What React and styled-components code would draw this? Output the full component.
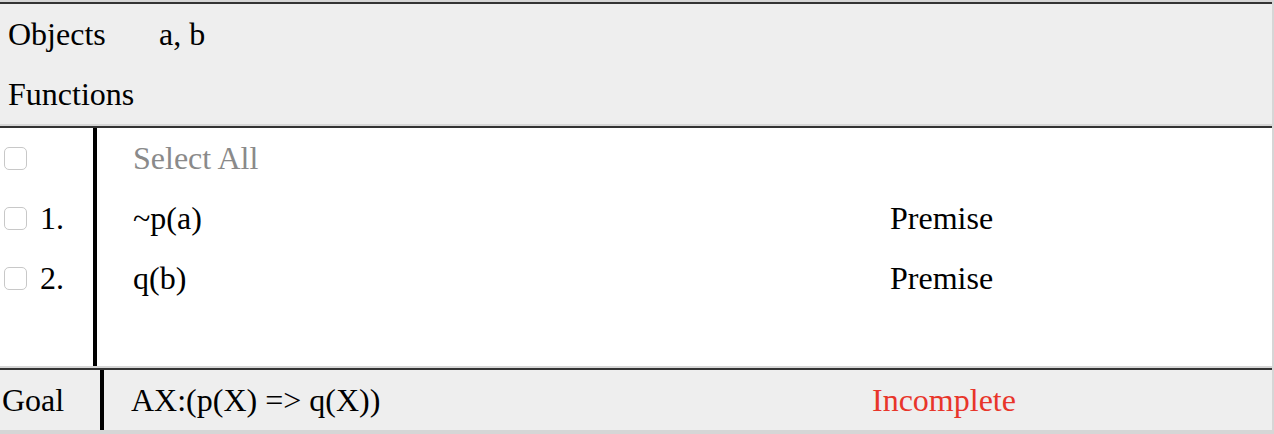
import styled, { createGlobalStyle } from "styled-components";

const GlobalStyle = createGlobalStyle`
  html, body {
    margin: 0;
    padding: 0;
    background: #ffffff;
  }
  body {
    font-family: "Liberation Serif", "Times New Roman", serif;
    font-size: 32px;
    color: #000;
  }
`;

const Page = styled.div`
  width: 1272px;
  border-top: 2px solid #d6d6d6;
  border-right: 2px solid #d6d6d6;
  border-bottom: 2px solid #d6d6d6;
`;

const Section = styled.div`
  border-top: 2px solid #333333;
  border-bottom: 2px solid #d6d6d6;
  background: ${(props) => (props.$shaded ? "#eeeeee" : "#ffffff")};
`;

const InfoRow = styled.div`
  display: flex;
  align-items: center;
  height: 60px;
  padding-left: 8px;
`;

const InfoLabel = styled.div`
  width: 151px;
`;

const Body = styled.div`
  display: flex;
`;

const NumberColumn = styled.div`
  width: 93px;
  border-right: 4px solid #000;
  padding-bottom: 58px;
`;

const StepColumn = styled.div`
  flex: 1;
  padding-left: 36px;
`;

const Cell = styled.div`
  display: flex;
  align-items: center;
  height: 60px;
  gap: 13px;
  padding-left: ${(props) => props.$indent || 0}px;
`;

const StepRow = styled.div`
  display: grid;
  grid-template-columns: 757px 1fr;
  align-items: center;
  height: 60px;
  color: ${(props) => (props.$muted ? "#8a8a8a" : "#000")};
`;

const Box = styled.span`
  display: inline-block;
  flex: none;
  width: 23px;
  height: 23px;
  border: 1px solid #c8c8c8;
  border-radius: 5px;
  background: #fff;
  box-sizing: border-box;
`;

const GoalRow = styled.div`
  display: flex;
  height: 60px;
  align-items: center;
`;

const GoalLabel = styled.div`
  width: 98px;
  height: 100%;
  padding-left: 2px;
  display: flex;
  align-items: center;
  border-right: 4px solid #000;
`;

const GoalFormula = styled.div`
  width: 741px;
  padding-left: 27px;
`;

const Status = styled.div`
  color: #e8352a;
`;

const steps = [
  { n: "1.", formula: "~p(a)", reason: "Premise" },
  { n: "2.", formula: "q(b)", reason: "Premise" },
];

export default function App() {
  return (
    <>
      <GlobalStyle />
      <Page>
        <Section $shaded>
          <InfoRow>
            <InfoLabel>Objects</InfoLabel>
            <div>a, b</div>
          </InfoRow>
          <InfoRow>
            <InfoLabel>Functions</InfoLabel>
          </InfoRow>
        </Section>
        <Section>
          <Body>
            <NumberColumn>
              <Cell $indent={4}>
                <Box />
              </Cell>
              {steps.map((s) => (
                <Cell key={s.n} $indent={4}>
                  <Box />
                  <span>{s.n}</span>
                </Cell>
              ))}
            </NumberColumn>
            <StepColumn>
              <StepRow $muted>
                <span>Select All</span>
              </StepRow>
              {steps.map((s) => (
                <StepRow key={s.n}>
                  <span>{s.formula}</span>
                  <span>{s.reason}</span>
                </StepRow>
              ))}
            </StepColumn>
          </Body>
        </Section>
        <Section $shaded>
          <GoalRow>
            <GoalLabel>Goal</GoalLabel>
            <GoalFormula>AX:(p(X) =&gt; q(X))</GoalFormula>
            <Status>Incomplete</Status>
          </GoalRow>
        </Section>
      </Page>
    </>
  );
}
